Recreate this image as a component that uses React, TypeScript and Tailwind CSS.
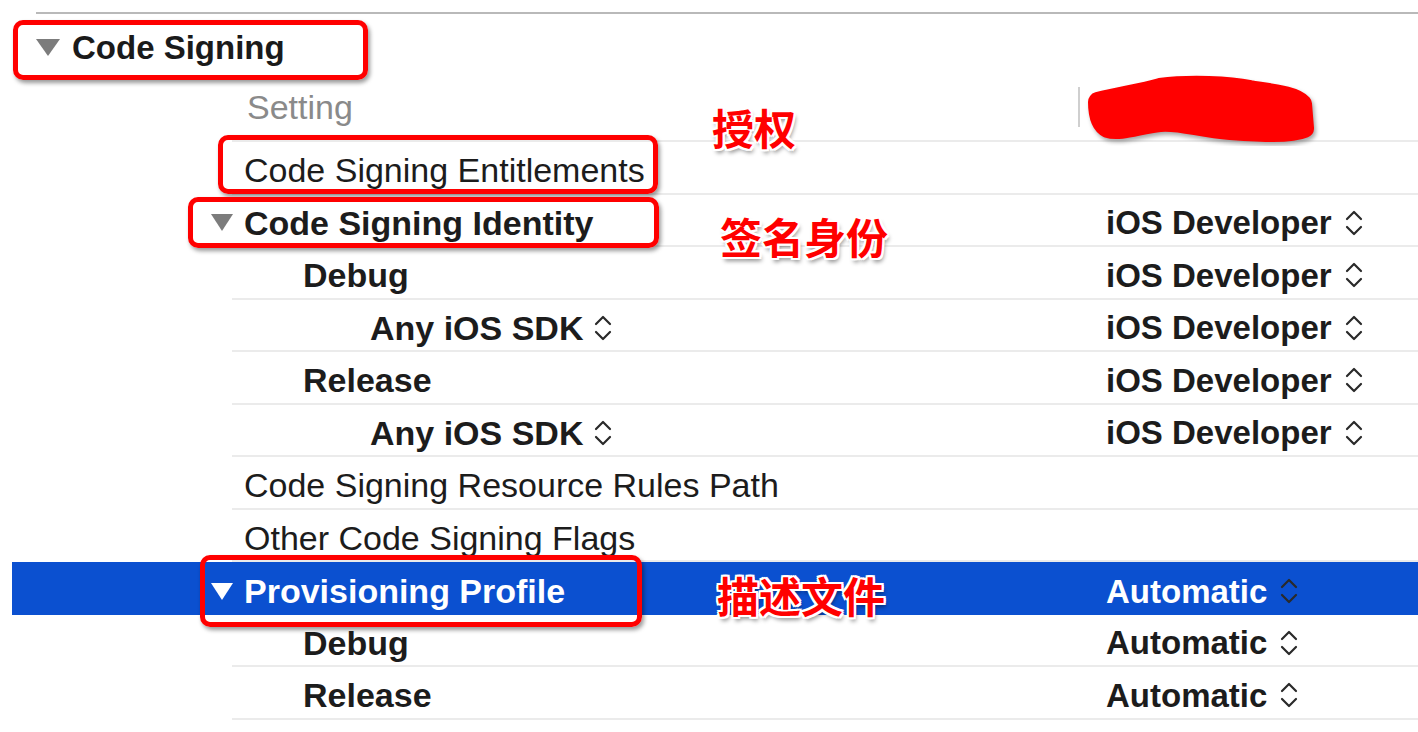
import React from 'react'

type Row = {
  label: string
  indent: string
  bold?: boolean
  tri?: boolean
  labelStepper?: boolean
  value?: string
  selected?: boolean
}

const ROWS: Row[] = [
  { label: 'Code Signing Entitlements', indent: 'pl-[12px]' },
  { label: 'Code Signing Identity', indent: 'pl-[12px]', bold: true, tri: true, value: 'iOS Developer' },
  { label: 'Debug', indent: 'pl-[71px]', bold: true, value: 'iOS Developer' },
  { label: 'Any iOS SDK', indent: 'pl-[138px]', bold: true, labelStepper: true, value: 'iOS Developer' },
  { label: 'Release', indent: 'pl-[71px]', bold: true, value: 'iOS Developer' },
  { label: 'Any iOS SDK', indent: 'pl-[138px]', bold: true, labelStepper: true, value: 'iOS Developer' },
  { label: 'Code Signing Resource Rules Path', indent: 'pl-[12px]' },
  { label: 'Other Code Signing Flags', indent: 'pl-[12px]' },
  { label: 'Provisioning Profile', indent: 'pl-[12px]', bold: true, tri: true, value: 'Automatic', selected: true },
  { label: 'Debug', indent: 'pl-[71px]', bold: true, value: 'Automatic' },
  { label: 'Release', indent: 'pl-[71px]', bold: true, value: 'Automatic' },
]

function Stepper() {
  return (
    <svg width="18" height="32" viewBox="0 0 18 32" className="shrink-0">
      <polyline points="2,12 9,5 16,12" fill="none" stroke="#2a2a2a" strokeWidth="2.2" strokeLinecap="round" strokeLinejoin="round" />
      <polyline points="2,20 9,27 16,20" fill="none" stroke="#2a2a2a" strokeWidth="2.2" strokeLinecap="round" strokeLinejoin="round" />
    </svg>
  )
}

function Triangle({ color, w = 22 }: { color: string; w?: number }) {
  return (
    <svg width={w} height="17" viewBox={`0 0 ${w} 17`} className="shrink-0">
      <polygon points={`0,0 ${w},0 ${w / 2},17`} fill={color} />
    </svg>
  )
}

const noteText =
  'absolute font-["Noto_Sans_CJK_SC",sans-serif] font-bold text-[42px] leading-none text-[#ff0000] [text-shadow:2px_0_0_#fff,-2px_0_0_#fff,0_2px_0_#fff,0_-2px_0_#fff,2px_2px_0_#fff,-2px_-2px_0_#fff,2px_-2px_0_#fff,-2px_2px_0_#fff,2px_4px_4px_rgba(0,0,0,0.45)]'

const box = 'absolute border-[5px] border-[#ff0000] rounded-[10px] shadow-[2px_3px_4px_rgba(0,0,0,0.4)]'

function SettingRow({ row }: { row: Row }) {
  const text = row.selected ? 'text-white' : 'text-[#1c1c1c]'
  const inner = (
    <div className={`flex h-full items-center pt-[6px] ${row.selected ? '' : 'border-b-2 border-[#ebebeb]'}`}>
      <div className={`flex w-[874px] items-center ${row.indent}`}>
        {row.tri && (
          <div className="-ml-[33px] mr-[11px] flex">
            <Triangle color={row.selected ? '#ffffff' : '#7c7c7c'} />
          </div>
        )}
        <span className={`${text} ${row.bold ? 'font-bold text-[34px]' : 'text-[34px]'} leading-none whitespace-nowrap`}>
          {row.label}
        </span>
        {row.labelStepper && (
          <div className="ml-[11px] flex">
            <Stepper />
          </div>
        )}
      </div>
      {row.value && (
        <div className="flex items-center gap-[13px]">
          <span className={`${text} font-bold text-[33px] leading-none whitespace-nowrap`}>{row.value}</span>
          <Stepper />
        </div>
      )}
    </div>
  )
  if (row.selected) {
    return (
      <div className="ml-[12px] h-[52.5px] bg-[#0b50d0]">
        <div className="ml-[220px] h-full">{inner}</div>
      </div>
    )
  }
  return <div className="ml-[232px] h-[52.5px]">{inner}</div>
}

export default function App() {
  return (
    <div className="relative h-[732px] w-[1418px] overflow-hidden bg-white font-['Liberation_Sans',Arial,sans-serif]">
      <div className="mt-[12px] ml-[36px] h-[2px] bg-[#b9b9b9]" />

      {/* section header */}
      <div className="flex h-[66px] items-center pl-[36px]">
        <Triangle color="#7c7c7c" w={24} />
        <span className="ml-[12px] font-bold text-[33px] leading-none text-[#1a1a1a]">Code Signing</span>
      </div>

      {/* column header */}
      <div className="ml-[232px] flex h-[62px] items-center border-b-2 border-[#ebebeb] pb-[6px]">
        <div className="w-[846px] pl-[15px] text-[34px] leading-none text-[#8a8a8a]">Setting</div>
        <div className="h-[40px] w-[2px] bg-[#cfcfcf]" />
      </div>

      {ROWS.map((row, i) => (
        <SettingRow key={i} row={row} />
      ))}

      {/* redacted value scribble */}
      <svg className="absolute left-[1080px] top-[74px]" width="240" height="72" viewBox="0 0 240 72">
        <g style={{ filter: 'drop-shadow(2px 3px 2px rgba(0,0,0,0.35))' }}>
          <path
            d="M18 28 C40 22 60 20 80 14 C110 10 150 12 170 16 C195 20 215 22 222 30 L224 54 C210 60 180 58 150 56 C120 54 100 46 80 48 C60 50 40 58 28 54 C20 50 18 40 18 28 Z"
            fill="#ff0000"
            stroke="#ff0000"
            strokeWidth="20"
            strokeLinejoin="round"
          />
        </g>
      </svg>

      {/* annotation boxes */}
      <div className={`${box} left-[13px] top-[20px] h-[60px] w-[355px]`} />
      <div className={`${box} left-[218px] top-[135px] h-[59px] w-[440px]`} />
      <div className={`${box} left-[188px] top-[197px] h-[51px] w-[471px]`} />
      <div className={`${box} left-[200px] top-[555px] h-[72px] w-[442px]`} />

      {/* annotation labels */}
      <div className={`${noteText} left-[712px] top-[106px]`}>授权</div>
      <div className={`${noteText} left-[720px] top-[215px]`}>签名身份</div>
      <div className={`${noteText} left-[717px] top-[574px]`}>描述文件</div>
    </div>
  )
}
